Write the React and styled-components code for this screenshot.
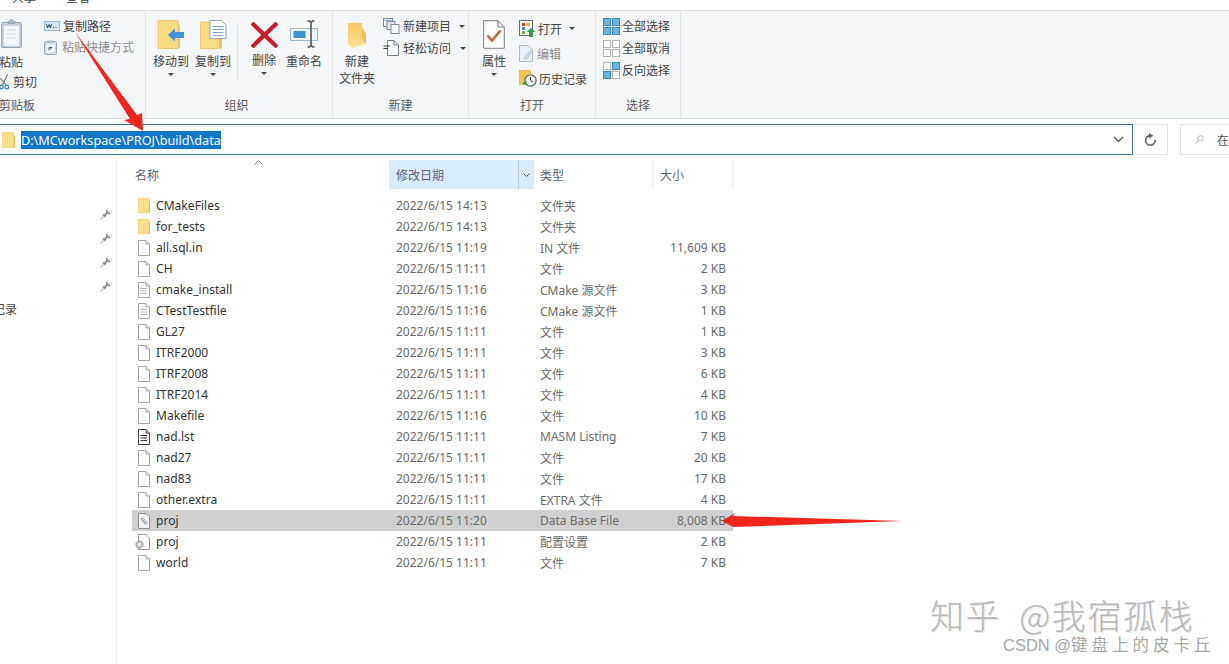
import React from "react";
import styled, { createGlobalStyle } from "styled-components";

const GlobalStyle = createGlobalStyle`
  html, body {
    margin: 0;
    padding: 0;
    background: #fff;
  }
  body {
    width: 1229px;
    height: 664px;
    overflow: hidden;
    font-family: "Noto Sans", "Noto Sans CJK SC", sans-serif;
    font-size: 12px;
    color: #333;
  }
`;

const Page = styled.div`
  position: relative;
  width: 1229px;
  height: 664px;
  overflow: hidden;
  background: #fff;
`;

const TabStrip = styled.div`
  height: 11px;
  overflow: hidden;
  display: flex;
  gap: 30px;
  padding-left: 12px;
  box-sizing: border-box;
  border-bottom: 1px solid #dfe0e1;
`;

const Tab = styled.span`
  margin-top: -9px;
  line-height: 14px;
  color: #444;
`;

const Ribbon = styled.div`
  display: flex;
  height: 108px;
  background: #f5f6f7;
  border-bottom: 1px solid #d5e4e2;
  box-sizing: border-box;
`;

const Group = styled.div`
  width: ${(p) => p.$w}px;
  flex: none;
  display: flex;
  flex-direction: column;
  border-right: 1px solid #e2e3e4;
  box-sizing: border-box;
  overflow: hidden;
`;

const GroupBody = styled.div`
  height: 84px;
  display: flex;
  padding-left: ${(p) => p.$left || 0}px;
  gap: ${(p) => p.$gap || 0}px;
  box-sizing: border-box;
`;

const GroupLabel = styled.div`
  line-height: 22px;
  text-align: ${(p) => p.$align || "center"};
  color: #5c5c5c;
  white-space: nowrap;
  margin-left: ${(p) => p.$shift || 0}px;
`;

const BigBtn = styled.div`
  width: ${(p) => p.$w || 40}px;
  flex: none;
  display: flex;
  flex-direction: column;
  align-items: center;
  padding-top: ${(p) => p.$top || 8}px;
  color: #444;
  line-height: ${(p) => p.$lh || 16}px;
  white-space: nowrap;
  text-align: center;
`;

const BigIcon = styled.div`
  height: 30px;
  margin-bottom: ${(p) => p.$mb || 3}px;
  display: flex;
  align-items: flex-start;
  justify-content: center;
`;

const Caret = styled.span`
  width: 0;
  height: 0;
  margin-top: 3px;
  border-left: 3px solid transparent;
  border-right: 3px solid transparent;
  border-top: 3px solid #444;
`;

const InlineCaret = styled(Caret)`
  margin: 0 0 0 5px;
`;

const Stack = styled.div`
  display: flex;
  flex-direction: column;
  padding-top: ${(p) => p.$top || 4}px;
  margin-left: ${(p) => p.$left || 0}px;
`;

const SmallBtn = styled.div`
  height: ${(p) => p.$h || 22}px;
  display: flex;
  align-items: center;
  gap: ${(p) => p.$gap || 3}px;
  color: ${(p) => (p.$muted ? "#8d8d8d" : "#444")};
  white-space: nowrap;
  & > svg {
    flex: none;
  }
`;

const Rule = styled.div`
  width: 1px;
  height: 56px;
  margin: 14px 8px 0 3px;
  background: #e0e1e2;
  flex: none;
`;

const PasteCol = styled.div`
  width: 24px;
  flex: none;
  display: flex;
  flex-direction: column;
  color: #444;
`;

const PasteIcon = styled.div`
  height: 32px;
  padding: 8px 0 0 1px;
`;

const PasteText = styled.div`
  margin: 4px 0 0 -1px;
  line-height: 16px;
  white-space: nowrap;
`;

const CutRow = styled.div`
  margin-top: 2px;
  display: flex;
  align-items: center;
  gap: 4px;
  white-space: nowrap;
  & > svg {
    flex: none;
  }
`;

const AddressRow = styled.div`
  height: 31px;
  margin-top: 5px;
  display: flex;
`;

const AddressBox = styled.div`
  width: 1133px;
  flex: none;
  box-sizing: border-box;
  border: 1.5px solid #35798f;
  border-left: none;
  display: flex;
  align-items: center;
  padding: 0 8px 0 2px;
`;

const PathText = styled.span`
  margin-left: 6px;
  background: #0f77c7;
  color: #fff;
  line-height: 18px;
  font-size: 12.65px;
  white-space: nowrap;
`;

const Chevron = styled.div`
  margin-left: auto;
  display: flex;
`;

const RefreshBtn = styled.div`
  width: 35px;
  flex: none;
  box-sizing: border-box;
  border: 1px solid #e3e3e3;
  border-left: none;
  display: flex;
  align-items: center;
  justify-content: center;
`;

const SearchBox = styled.div`
  margin-left: 12px;
  flex: 1;
  box-sizing: border-box;
  border: 1px solid #e3e3e3;
  border-right: none;
  display: flex;
  align-items: center;
  gap: 13px;
  padding-left: 14px;
  color: #555;
  white-space: nowrap;
  overflow: hidden;
`;

const Main = styled.div`
  display: flex;
  height: 509px;
`;

const NavPane = styled.div`
  width: 117px;
  flex: none;
  box-sizing: border-box;
  border-right: 1px solid #f0f0f0;
  padding-top: 47px;
  overflow: hidden;
`;

const PinRow = styled.div`
  height: 24px;
  display: flex;
  align-items: center;
  justify-content: flex-end;
  padding-right: 5px;
`;

const NavText = styled.div`
  margin: 2px 0 0 -7px;
  line-height: 20px;
  color: #444;
  white-space: nowrap;
`;

const Content = styled.div`
  flex: 1;
  padding: 5px 0 0 15px;
  min-width: 0;
`;

const columns = "257px 145px 119px 80px";

const HeaderRow = styled.div`
  width: 601px;
  height: 29px;
  display: grid;
  grid-template-columns: ${columns};
  margin-bottom: 6px;
`;

const HeaderCell = styled.div`
  position: relative;
  display: flex;
  align-items: center;
  padding-left: ${(p) => p.$pad || 7}px;
  color: #5d6673;
  border-right: 1px solid ${(p) => (p.$line ? "#eaeaea" : "transparent")};
  background: ${(p) => (p.$active ? "#d9ebf9" : "transparent")};
  box-sizing: border-box;
`;

const SortMark = styled.div`
  position: absolute;
  left: 122px;
  top: 0;
  display: flex;
`;

const DropPart = styled.div`
  margin-left: auto;
  width: 14px;
  height: 100%;
  border-left: 1px solid #b8c9d8;
  display: flex;
  align-items: center;
  justify-content: center;
`;

const FileRow = styled.div`
  width: 601px;
  height: 21px;
  display: grid;
  grid-template-columns: ${columns};
  align-items: center;
  background: ${(p) => (p.$selected ? "#d0d0d0" : "transparent")};
`;

const NameCell = styled.div`
  display: flex;
  align-items: center;
  gap: 6px;
  padding-left: 6px;
  color: #333;
  white-space: nowrap;
  letter-spacing: 0.05px;
`;

const IconSlot = styled.div`
  width: 12px;
  height: 16px;
  flex: none;
  display: flex;
  justify-content: center;
`;

const DateCell = styled.div`
  padding-left: 7px;
  color: #6b6b6b;
  white-space: nowrap;
`;

const TypeCell = styled.div`
  padding-left: 6px;
  color: #6b6b6b;
  white-space: nowrap;
`;

const SizeCell = styled.div`
  padding-right: 7px;
  text-align: right;
  color: #6b6b6b;
  white-space: nowrap;
`;

const Arrows = styled.svg`
  position: absolute;
  left: 0;
  top: 0;
  pointer-events: none;
`;

const WatermarkMain = styled.div`
  position: absolute;
  left: 930px;
  top: 595px;
  font-family: "Noto Sans CJK SC", sans-serif;
  font-size: 34px;
  line-height: 40px;
  font-weight: 300;
  letter-spacing: 1.6px;
  word-spacing: 9px;
  color: #b9b9b9;
  text-shadow: 1px 1px 0 #e6e6e6;
  white-space: nowrap;
`;

const WatermarkSub = styled.div`
  position: absolute;
  left: 1003px;
  top: 635px;
  font-family: "Liberation Sans", "Noto Sans CJK SC", sans-serif;
  font-size: 16.5px;
  line-height: 20px;
  color: #a8a8a8;
  white-space: nowrap;
`;

const WatermarkCjk = styled.span`
  letter-spacing: 4px;
`;

const Folder = ({ w = 12, h = 15 }) => (
  <svg width={w} height={h} viewBox="0 0 12 15">
    <rect x="0" y="0" width="11" height="15" fill="#fcdf8e" />
    <path d="M0.4 0.4 H10.6 V14.6 H0.4 Z" fill="none" stroke="#efcf78" strokeWidth="0.6" />
    <path d="M11 2 L12 4 V15 H11 Z" fill="#e4bb5c" />
  </svg>
);

const Doc = ({ lines, dark }) => (
  <svg width="12" height="16" viewBox="0 0 12 16">
    <path d="M0.5 0.5 H8 L11.5 4 V15.5 H0.5 Z" fill="#fff" stroke={dark ? "#444" : "#a8a8a8"} />
    <path d="M8 0.5 V4 H11.5" fill="none" stroke={dark ? "#444" : "#a8a8a8"} />
    {lines && <path d="M2.5 6.5 H9 M2.5 9 H9 M2.5 11.5 H9" stroke={dark ? "#333" : "#b5b5b5"} />}
  </svg>
);

const DbDoc = () => (
  <svg width="12" height="16" viewBox="0 0 12 16">
    <path d="M0.5 0.5 H8 L11.5 4 V15.5 H0.5 Z" fill="#f4f4f4" stroke="#8c8c8c" />
    <path d="M3 5 L8.5 11 M4.5 4.5 L9 9.5 L7.5 11.5 L3 6.5 Z" fill="none" stroke="#8fa3a8" />
  </svg>
);

const GearDoc = () => (
  <svg width="16" height="16" viewBox="0 0 16 16" style={{ marginLeft: -4, flex: "none" }}>
    <path d="M4.5 0.5 H12 L15.5 4 V15.5 H4.5 Z" fill="#fff" stroke="#9a9a9a" />
    <circle cx="5.5" cy="10.5" r="3.6" fill="#c9c9c9" stroke="#777" strokeDasharray="1.4 0.8" />
    <circle cx="5.5" cy="10.5" r="1.2" fill="#fff" />
  </svg>
);

const Pin = () => (
  <svg width="11" height="11" viewBox="0 0 11 11">
    <path d="M6.3 0.6 L10.4 4.7 L9.2 5.2 L7.6 4.8 L5.6 7.2 L5.4 9 L1.9 5.5 L3.8 5.4 L6.1 3.4 L5.8 1.8 Z" fill="#8d8d8d" />
    <path d="M3.4 7.5 L0.6 10.4" stroke="#8d8d8d" />
  </svg>
);

const PasteGlyph = () => (
  <svg width="21" height="29" viewBox="0 0 21 29">
    <rect x="0.7" y="3.5" width="19.6" height="25" rx="1.5" fill="#c7d2de" stroke="#8e9eae" />
    <rect x="3" y="7" width="15" height="19.5" fill="#f3f5f7" />
    <path d="M5.5 11 H15.5 M5.5 15 H15.5 M5.5 19 H15.5" stroke="#d4dbe2" />
    <path d="M7 4.5 V2.5 H9 V0.7 H12 V2.5 H14 V4.5 Z" fill="#aebccb" stroke="#8190a0" strokeWidth="0.6" />
  </svg>
);

const Scissors = () => (
  <svg width="9" height="16" viewBox="0 0 9 16">
    <path d="M7.5 0.5 L2.5 11 M0 4 L6 11" stroke="#6a6a6a" strokeWidth="1.1" fill="none" />
    <circle cx="1.5" cy="13" r="1.8" fill="none" stroke="#2b80c4" strokeWidth="1.2" />
    <circle cx="6.8" cy="13" r="1.8" fill="none" stroke="#2b80c4" strokeWidth="1.2" />
  </svg>
);

const CopyPathGlyph = () => (
  <svg width="16" height="10" viewBox="0 0 16 10">
    <rect x="0.5" y="0.5" width="15" height="9" fill="#d6e6f5" stroke="#9dbbd8" />
    <path d="M2.5 3 L3.5 7 L5 3.5 L6.5 7 L7.5 3 M9 6.5 H10 M11.5 6.5 H12.5" fill="none" stroke="#1f3f66" strokeWidth="0.9" />
  </svg>
);

const ShortcutGlyph = () => (
  <svg width="13" height="15" viewBox="0 0 13 15">
    <rect x="0.6" y="1.6" width="11.8" height="12.8" rx="1" fill="#dbe3ec" stroke="#8fa0b2" />
    <rect x="3.5" y="0.5" width="6" height="2.6" fill="#aebccb" />
    <rect x="2.8" y="4.6" width="7.4" height="7.8" fill="#fff" />
    <path d="M5 10.5 V7.5 H8 M8.4 7 L5.6 9.8" stroke="#31618f" fill="none" />
  </svg>
);

const MoveGlyph = () => (
  <svg width="28" height="29" viewBox="0 0 28 29">
    <rect x="1" y="0.5" width="20" height="28" fill="#fbdc84" stroke="#e6c263" strokeWidth="0.8" />
    <path d="M21 3 L23 6 V28 H21 Z" fill="#eac467" />
    <path d="M11 15 L18 8.5 V12 H27 V18 H18 V21.5 Z" fill="#3f93d6" />
  </svg>
);

const CopyGlyph = () => (
  <svg width="27" height="29" viewBox="0 0 27 29">
    <rect x="0.5" y="2" width="19" height="26.5" fill="#fbdc84" stroke="#e6c263" strokeWidth="0.8" />
    <path d="M19.5 4 L22 7 V28.5 H19.5 Z" fill="#eac467" />
    <path d="M10 0.5 H21.5 L26 5 V18.5 H10 Z" fill="#fff" stroke="#7f95ad" strokeWidth="0.8" />
    <path d="M12.5 6.5 H23.5 M12.5 9.5 H23.5 M12.5 12.5 H23.5 M12.5 15.5 H23.5" stroke="#7fa6cc" />
  </svg>
);

const DeleteGlyph = () => (
  <svg width="27" height="26" viewBox="0 0 27 26">
    <path d="M2.5 2.5 L24.5 23.5 M24.5 2.5 L2.5 23.5" stroke="#c81c2b" strokeWidth="4.2" strokeLinecap="square" />
  </svg>
);

const RenameGlyph = () => (
  <svg width="29" height="28" viewBox="0 0 29 28">
    <rect x="0.5" y="8.5" width="27" height="12" fill="#eef4fa" stroke="#9dbad4" />
    <rect x="3.5" y="11" width="12" height="7" fill="#3e93d6" />
    <path d="M17.5 1 H19.5 L21 2.5 L22.5 1 H24.5 M21 2.5 V25.5 M17.5 27 H19.5 L21 25.5 L22.5 27 H24.5" fill="none" stroke="#555" strokeWidth="1.6" />
  </svg>
);

const NewFolderGlyph = () => (
  <svg width="20" height="26" viewBox="0 0 20 26">
    <defs>
      <linearGradient id="nf" x1="0" y1="0" x2="0" y2="1">
        <stop offset="0" stopColor="#f7c765" />
        <stop offset="1" stopColor="#fde08f" />
      </linearGradient>
    </defs>
    <path d="M1 1 H15 V17 L19 22 L5 26 L1 22 Z" fill="url(#nf)" />
    <path d="M15 5 L19 12 V22 L15 17 Z" fill="#efbe5c" />
  </svg>
);

const NewItemGlyph = () => (
  <svg width="17" height="16" viewBox="0 0 17 16">
    <rect x="0.5" y="0.5" width="9" height="8" fill="#fff" stroke="#7a8a99" />
    <rect x="4" y="3.5" width="8" height="8" fill="#dfe8f1" stroke="#7a8a99" />
    <rect x="8" y="6.5" width="8" height="9" fill="#fff" stroke="#7a8a99" />
    <path d="M1.5 2.5 H8.5" stroke="#8db5dc" strokeWidth="1.5" />
  </svg>
);

const EasyGlyph = () => (
  <svg width="16" height="16" viewBox="0 0 16 16">
    <path d="M4.5 0.5 H11 L15.5 5 V15.5 H4.5 Z" fill="#fff" stroke="#6f7d8b" />
    <path d="M11 0.5 V5 H15.5" fill="none" stroke="#6f7d8b" />
    <path d="M0.5 6 H7 M0.5 8.5 H5" stroke="#3a3a3a" />
  </svg>
);

const PropsGlyph = () => (
  <svg width="22" height="29" viewBox="0 0 22 29">
    <path d="M0.7 0.7 H15 L21.3 7 V28.3 H0.7 Z" fill="#fff" stroke="#7b7b7b" />
    <path d="M15 0.7 V7 H21.3" fill="none" stroke="#7b7b7b" />
    <path d="M4.5 15.5 L9 20.5 L17.5 10.5" fill="none" stroke="#c9653a" strokeWidth="2.6" />
  </svg>
);

const OpenGlyph = () => (
  <svg width="17" height="17" viewBox="0 0 17 17">
    <rect x="0.5" y="0.5" width="13" height="15" fill="#fff" stroke="#6c6c6c" />
    <rect x="3" y="3" width="3" height="3" fill="#d13c32" />
    <rect x="7" y="3" width="4" height="3" fill="#e3b341" />
    <rect x="3" y="7" width="3" height="3" fill="#3e93d6" />
    <rect x="3" y="11" width="3" height="3" fill="#6fb23c" />
    <path d="M12 8 L16.5 12 H14 V17 H10 V12 H7.5 Z" fill="#2f9e44" />
  </svg>
);

const EditGlyph = () => (
  <svg width="15" height="17" viewBox="0 0 15 17">
    <path d="M0.5 0.5 H9 L13.5 5 V16.5 H0.5 Z" fill="#e9f0f7" stroke="#a9bccf" />
    <path d="M5 13 L12 5 L14 6.5 L7 14.5 Z" fill="#cfdcea" stroke="#9fb3c7" strokeWidth="0.6" />
  </svg>
);

const HistoryGlyph = () => (
  <svg width="18" height="17" viewBox="0 0 18 17">
    <rect x="0.5" y="0.5" width="11" height="14" fill="#f3c64f" stroke="#d9a93a" strokeWidth="0.6" />
    <circle cx="11.5" cy="10.5" r="5.6" fill="#f4f4f4" stroke="#5a7d6b" strokeWidth="1.4" />
    <path d="M11.5 7 V10.5 L14 12" fill="none" stroke="#444" />
    <path d="M3 14 L7 10 L8 15 Z" fill="#3c9a48" />
  </svg>
);

const SelectGlyph = ({ cells }) => (
  <svg width="17" height="17" viewBox="0 0 17 17">
    {[
      [0.5, 0.5],
      [9.5, 0.5],
      [0.5, 9.5],
      [9.5, 9.5],
    ].map(([x, y], i) => (
      <rect
        key={i}
        x={x}
        y={y}
        width="7"
        height="7"
        fill={cells[i] ? "#6db3e6" : "#fff"}
        stroke={cells[i] ? "#3b87c0" : "#b4b4b4"}
      />
    ))}
  </svg>
);

const ChevronDown = () => (
  <svg width="11" height="7" viewBox="0 0 11 7">
    <path d="M1 1 L5.5 5.5 L10 1" fill="none" stroke="#444" strokeWidth="1.1" />
  </svg>
);

const Refresh = () => (
  <svg width="13" height="14" viewBox="0 0 13 14">
    <path d="M6 2.6 A4.8 4.8 0 1 0 11.2 7" fill="none" stroke="#666" strokeWidth="1.7" />
    <path d="M5 0 L9.5 2.8 L5 5.4 Z" fill="#666" />
  </svg>
);

const SearchGlyph = () => (
  <svg width="13" height="13" viewBox="0 0 13 13">
    <circle cx="8" cy="5" r="4" fill="none" stroke="#9a9a9a" />
    <path d="M5 8 L0.8 12.2" stroke="#9a9a9a" strokeWidth="1.3" />
  </svg>
);

const iconFor = {
  folder: <Folder />,
  doc: <Doc />,
  text: <Doc lines />,
  list: <Doc lines dark />,
  db: <DbDoc />,
  gear: <GearDoc />,
};

const files = [
  { name: "CMakeFiles", date: "2022/6/15 14:13", type: "文件夹", size: "", icon: "folder" },
  { name: "for_tests", date: "2022/6/15 14:13", type: "文件夹", size: "", icon: "folder" },
  { name: "all.sql.in", date: "2022/6/15 11:19", type: "IN 文件", size: "11,609 KB", icon: "doc" },
  { name: "CH", date: "2022/6/15 11:11", type: "文件", size: "2 KB", icon: "doc" },
  { name: "cmake_install", date: "2022/6/15 11:16", type: "CMake 源文件", size: "3 KB", icon: "text" },
  { name: "CTestTestfile", date: "2022/6/15 11:16", type: "CMake 源文件", size: "1 KB", icon: "text" },
  { name: "GL27", date: "2022/6/15 11:11", type: "文件", size: "1 KB", icon: "doc" },
  { name: "ITRF2000", date: "2022/6/15 11:11", type: "文件", size: "3 KB", icon: "doc" },
  { name: "ITRF2008", date: "2022/6/15 11:11", type: "文件", size: "6 KB", icon: "doc" },
  { name: "ITRF2014", date: "2022/6/15 11:11", type: "文件", size: "4 KB", icon: "doc" },
  { name: "Makefile", date: "2022/6/15 11:16", type: "文件", size: "10 KB", icon: "doc" },
  { name: "nad.lst", date: "2022/6/15 11:11", type: "MASM Listing", size: "7 KB", icon: "list" },
  { name: "nad27", date: "2022/6/15 11:11", type: "文件", size: "20 KB", icon: "doc" },
  { name: "nad83", date: "2022/6/15 11:11", type: "文件", size: "17 KB", icon: "doc" },
  { name: "other.extra", date: "2022/6/15 11:11", type: "EXTRA 文件", size: "4 KB", icon: "doc" },
  { name: "proj", date: "2022/6/15 11:20", type: "Data Base File", size: "8,008 KB", icon: "db", selected: true },
  { name: "proj", date: "2022/6/15 11:11", type: "配置设置", size: "2 KB", icon: "gear" },
  { name: "world", date: "2022/6/15 11:11", type: "文件", size: "7 KB", icon: "doc" },
];

const App = () => {
  return (
    <Page>
      <GlobalStyle />
      <TabStrip>
        <Tab>共享</Tab>
        <Tab>查看</Tab>
      </TabStrip>

      <Ribbon>
        <Group $w={146}>
          <GroupBody>
            <PasteCol>
              <PasteIcon>
                <PasteGlyph />
              </PasteIcon>
              <PasteText>粘贴</PasteText>
              <CutRow>
                <Scissors />
                剪切
              </CutRow>
            </PasteCol>
            <Stack $left={20} $top={4}>
              <SmallBtn $gap={3}>
                <CopyPathGlyph />
                复制路径
              </SmallBtn>
              <SmallBtn $muted $gap={5} $h={20}>
                <ShortcutGlyph />
                粘贴快捷方式
              </SmallBtn>
            </Stack>
          </GroupBody>
          <GroupLabel $align="left" $shift={-1}>
            剪贴板
          </GroupLabel>
        </Group>

        <Group $w={187}>
          <GroupBody $left={4}>
            <BigBtn $w={42} $top={9}>
              <BigIcon $mb={4}>
                <MoveGlyph />
              </BigIcon>
              移动到
              <Caret />
            </BigBtn>
            <BigBtn $w={42} $top={9}>
              <BigIcon $mb={4}>
                <CopyGlyph />
              </BigIcon>
              复制到
              <Caret />
            </BigBtn>
            <Rule />
            <BigBtn $w={36} $top={11}>
              <BigIcon $mb={1}>
                <DeleteGlyph />
              </BigIcon>
              删除
              <Caret />
            </BigBtn>
            <BigBtn $w={44} $top={9}>
              <BigIcon $mb={4}>
                <RenameGlyph />
              </BigIcon>
              重命名
            </BigBtn>
          </GroupBody>
          <GroupLabel $shift={-5}>组织</GroupLabel>
        </Group>

        <Group $w={136}>
          <GroupBody $left={3}>
            <BigBtn $w={42} $top={11} $lh={17}>
              <BigIcon $mb={1}>
                <NewFolderGlyph />
              </BigIcon>
              新建
              <br />
              文件夹
            </BigBtn>
            <Stack $left={5} $top={4}>
              <SmallBtn $gap={3}>
                <NewItemGlyph />
                新建项目
                <InlineCaret />
              </SmallBtn>
              <SmallBtn $gap={4}>
                <EasyGlyph />
                轻松访问
                <InlineCaret />
              </SmallBtn>
            </Stack>
          </GroupBody>
          <GroupLabel>新建</GroupLabel>
        </Group>

        <Group $w={127}>
          <GroupBody $left={5}>
            <BigBtn $w={40} $top={9}>
              <BigIcon $mb={4}>
                <PropsGlyph />
              </BigIcon>
              属性
              <Caret />
            </BigBtn>
            <Stack $left={5} $top={5}>
              <SmallBtn $h={25} $gap={2}>
                <OpenGlyph />
                打开
                <InlineCaret />
              </SmallBtn>
              <SmallBtn $h={25} $muted $gap={3}>
                <EditGlyph />
                编辑
              </SmallBtn>
              <SmallBtn $h={25} $gap={2}>
                <HistoryGlyph />
                历史记录
              </SmallBtn>
            </Stack>
          </GroupBody>
          <GroupLabel>打开</GroupLabel>
        </Group>

        <Group $w={85}>
          <GroupBody $left={7}>
            <Stack $top={4}>
              <SmallBtn $gap={2}>
                <SelectGlyph cells={[1, 1, 1, 1]} />
                全部选择
              </SmallBtn>
              <SmallBtn $gap={2}>
                <SelectGlyph cells={[0, 0, 0, 0]} />
                全部取消
              </SmallBtn>
              <SmallBtn $gap={2}>
                <SelectGlyph cells={[0, 1, 1, 0]} />
                反向选择
              </SmallBtn>
            </Stack>
          </GroupBody>
          <GroupLabel>选择</GroupLabel>
        </Group>
      </Ribbon>

      <AddressRow>
        <AddressBox>
          <Folder w={13} h={16} />
          <PathText>D:\MCworkspace\PROJ\build\data</PathText>
          <Chevron>
            <ChevronDown />
          </Chevron>
        </AddressBox>
        <RefreshBtn>
          <Refresh />
        </RefreshBtn>
        <SearchBox>
          <SearchGlyph />在
        </SearchBox>
      </AddressRow>

      <Main>
        <NavPane>
          <PinRow>
            <Pin />
          </PinRow>
          <PinRow>
            <Pin />
          </PinRow>
          <PinRow>
            <Pin />
          </PinRow>
          <PinRow>
            <Pin />
          </PinRow>
          <NavText>记录</NavText>
        </NavPane>

        <Content>
          <HeaderRow>
            <HeaderCell $pad={3}>
              名称
              <SortMark>
                <svg width="9" height="5" viewBox="0 0 9 5">
                  <path d="M0.5 4.5 L4.5 0.8 L8.5 4.5" fill="none" stroke="#777" />
                </svg>
              </SortMark>
            </HeaderCell>
            <HeaderCell $active>
              修改日期
              <DropPart>
                <svg width="7" height="4" viewBox="0 0 7 4">
                  <path d="M0.5 0.5 L3.5 3.5 L6.5 0.5" fill="none" stroke="#555" />
                </svg>
              </DropPart>
            </HeaderCell>
            <HeaderCell $pad={6} $line>
              类型
            </HeaderCell>
            <HeaderCell $line>大小</HeaderCell>
          </HeaderRow>

          {files.map((f, i) => (
            <FileRow key={i} $selected={f.selected}>
              <NameCell>
                <IconSlot>{iconFor[f.icon]}</IconSlot>
                {f.name}
              </NameCell>
              <DateCell>{f.date}</DateCell>
              <TypeCell>{f.type}</TypeCell>
              <SizeCell>{f.size}</SizeCell>
            </FileRow>
          ))}
        </Content>
      </Main>

      <Arrows width="1229" height="664" viewBox="0 0 1229 664">
        <polygon points="75,32 137,115 142,113 143,131 124,120 130,119" fill="#f0261c" />
        <polygon points="722,521 735,513 733,516 903,521 733,527 735,528" fill="#f0261c" />
      </Arrows>

      <WatermarkMain>知乎 @我宿孤栈</WatermarkMain>
      <WatermarkSub>
        CSDN @<WatermarkCjk>键盘上的皮卡丘</WatermarkCjk>
      </WatermarkSub>
    </Page>
  );
};

export default App;
